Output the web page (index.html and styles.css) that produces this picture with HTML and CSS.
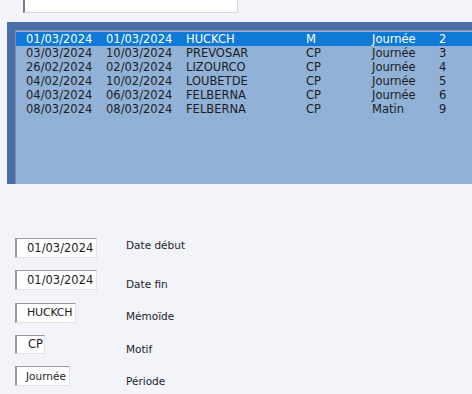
FILE: index.html
```html
<!DOCTYPE html>
<html lang="fr">
<head>
<meta charset="utf-8">
<title>Absences</title>
<link rel="stylesheet" href="styles.css">
</head>
<body>
<div class="topbox"></div>
<div class="panel">
  <div class="list">
    <div class="row selected"><span>01/03/2024</span><span>01/03/2024</span><span>HUCKCH</span><span>M</span><span>Journée</span><span>2</span></div>
    <div class="row"><span>03/03/2024</span><span>10/03/2024</span><span>PREVOSAR</span><span>CP</span><span>Journée</span><span>3</span></div>
    <div class="row"><span>26/02/2024</span><span>02/03/2024</span><span>LIZOURCO</span><span>CP</span><span>Journée</span><span>4</span></div>
    <div class="row"><span>04/02/2024</span><span>10/02/2024</span><span>LOUBETDE</span><span>CP</span><span>Journée</span><span>5</span></div>
    <div class="row"><span>04/03/2024</span><span>06/03/2024</span><span>FELBERNA</span><span>CP</span><span>Journée</span><span>6</span></div>
    <div class="row"><span>08/03/2024</span><span>08/03/2024</span><span>FELBERNA</span><span>CP</span><span>Matin</span><span>9</span></div>
  </div>
</div>
<div class="form">
  <div class="field f1"><div class="box w-date">01/03/2024</div><div class="label">Date début</div></div>
  <div class="field f2"><div class="box w-date">01/03/2024</div><div class="label">Date fin</div></div>
  <div class="field f3"><div class="box w-memo">HUCKCH</div><div class="label">Mémoïde</div></div>
  <div class="field f4"><div class="box w-motif">CP</div><div class="label">Motif</div></div>
  <div class="field f5"><div class="box w-per small">Journée</div><div class="label">Période</div></div>
</div>
</body>
</html>
```
FILE: styles.css
```css
html, body {
  margin: 0;
  padding: 0;
}
body {
  background: #f3f4f9;
  width: 472px;
  height: 394px;
  overflow: hidden;
  font-family: "DejaVu Sans", Tahoma, sans-serif;
  color: #1c1c24;
}
.topbox {
  margin-left: 23px;
  width: 212px;
  height: 12px;
  background: #ffffff;
  border-left: 2px solid #7a7a7a;
  border-right: 1px solid #d8d8d8;
  border-bottom: 1px solid #d8d8d8;
}
.panel {
  margin-top: 9px;
  margin-left: 7px;
  height: 154px;
  background: #4a6fa8;
  padding: 8px 0 0 8px;
  display: flex;
}
.list {
  flex: 1;
  background: #92b1d6;
  border-left: 1px solid #8a8f99;
  border-top: 1px solid #8a8f99;
  padding-top: 1px;
}
.row {
  display: grid;
  grid-template-columns: 80px 80px 120px 66px 67px 1fr;
  padding-left: 10px;
  height: 14px;
  line-height: 14px;
  font-size: 11.5px;
  white-space: nowrap;
}
.row.selected {
  background: #0f79d8;
  color: #ffffff;
}
.form {
  padding-top: 54px;
  padding-left: 15px;
}
.field {
  display: flex;
  align-items: flex-start;
  height: 32px;
}
.f2 { height: 33px; }
.f3 { height: 32px; }
.f4 { height: 31px; }
.box {
  box-sizing: border-box;
  height: 20px;
  background: #ffffff;
  border-top: 1px solid #9a9a9a;
  border-left: 2px solid #9a9a9a;
  border-right: 1px solid #e2e2e2;
  border-bottom: 1px solid #e2e2e2;
  font-size: 11.5px;
  line-height: 18px;
  padding-left: 10px;
  white-space: nowrap;
  overflow: hidden;
}
.f4 .box { height: 19px; line-height: 17px; }
.box.small { font-size: 10.5px; padding-left: 9px; }
.w-date { width: 82px; }
.w-memo { width: 61px; font-size: 11px; letter-spacing: -0.2px; }
.w-motif { width: 30px; padding-left: 11px; }
.w-per { width: 55px; }
.label {
  position: relative;
  font-size: 10.5px;
  line-height: 13px;
  color: #222228;
}
.f1 .label { margin-left: 29px; margin-top: 1px; }
.f2 .label { margin-left: 29px; margin-top: 8px; }
.f3 .label { margin-left: 50px; margin-top: 7px; }
.f4 .label { margin-left: 81px; margin-top: 8px; }
.f5 .label { margin-left: 56px; margin-top: 9px; }
```
